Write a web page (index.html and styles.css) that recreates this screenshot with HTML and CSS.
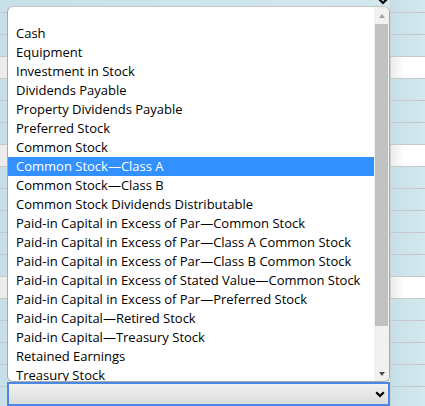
FILE: index.html
```html
<!DOCTYPE html>
<html>
<head>
<meta charset="utf-8">
<link rel="stylesheet" href="styles.css">
</head>
<body>
<div class="grid">
  <div class="row"><div class="cell main"></div><div class="cell side"></div></div>
  <div class="row"><div class="cell main"></div><div class="cell side"></div></div>
  <div class="row"><div class="cell main"></div><div class="cell side"></div></div>
  <div class="row white"><div class="cell main"></div><div class="cell side"></div></div>
  <div class="row"><div class="cell main"></div><div class="cell side"></div></div>
  <div class="row"><div class="cell main"></div><div class="cell side"></div></div>
  <div class="row"><div class="cell main"></div><div class="cell side"></div></div>
  <div class="row white"><div class="cell main"></div><div class="cell side"></div></div>
  <div class="row"><div class="cell main"></div><div class="cell side"></div></div>
  <div class="row"><div class="cell main"></div><div class="cell side"></div></div>
  <div class="row"><div class="cell main"></div><div class="cell side"></div></div>
  <div class="row"><div class="cell main"></div><div class="cell side"></div></div>
  <div class="row"><div class="cell main"></div><div class="cell side"></div></div>
  <div class="row white"><div class="cell main"></div><div class="cell side"></div></div>
  <div class="row"><div class="cell main"></div><div class="cell side"></div></div>
  <div class="row"><div class="cell main"></div><div class="cell side"></div></div>
  <div class="row"><div class="cell main"></div><div class="cell side"></div></div>
  <div class="row"><div class="cell main"></div><div class="cell side"></div></div>
  <div class="row"><div class="cell main"></div><div class="cell side"></div></div>
</div>

<div class="popup">
  <svg class="chev top-chev" width="10" height="7" viewBox="0 0 10 7"><path d="M1.2 1.2 L5 5 L8.8 1.2" fill="none" stroke="#000" stroke-width="2.2"/></svg>
  <div class="listbox">
    <ul class="options">
      <li class="opt"></li>
      <li class="opt">Cash</li>
      <li class="opt">Equipment</li>
      <li class="opt">Investment in Stock</li>
      <li class="opt">Dividends Payable</li>
      <li class="opt">Property Dividends Payable</li>
      <li class="opt">Preferred Stock</li>
      <li class="opt">Common Stock</li>
      <li class="opt selected">Common Stock—Class A</li>
      <li class="opt">Common Stock—Class B</li>
      <li class="opt">Common Stock Dividends Distributable</li>
      <li class="opt">Paid-in Capital in Excess of Par—Common Stock</li>
      <li class="opt">Paid-in Capital in Excess of Par—Class A Common Stock</li>
      <li class="opt">Paid-in Capital in Excess of Par—Class B Common Stock</li>
      <li class="opt">Paid-in Capital in Excess of Stated Value—Common Stock</li>
      <li class="opt">Paid-in Capital in Excess of Par—Preferred Stock</li>
      <li class="opt">Paid-in Capital—Retired Stock</li>
      <li class="opt">Paid-in Capital—Treasury Stock</li>
      <li class="opt">Retained Earnings</li>
      <li class="opt">Treasury Stock</li>
    </ul>
    <div class="scrollbar">
      <div class="sb-btn"><span class="tri up"></span></div>
      <div class="sb-track"><div class="sb-thumb"></div></div>
      <div class="sb-btn"><span class="tri down"></span></div>
    </div>
  </div>
  <div class="select">
    <svg class="chev" width="10" height="7" viewBox="0 0 10 7"><path d="M1.2 1.2 L5 5 L8.8 1.2" fill="none" stroke="#000" stroke-width="2.2"/></svg>
  </div>
</div>
</body>
</html>
```

FILE: styles.css
```css
html, body {
  margin: 0;
  padding: 0;
  width: 425px;
  height: 406px;
  overflow: hidden;
  font-family: "Open Sans", "Liberation Sans", sans-serif;
}

.grid {
  margin-top: -9px;
  display: flex;
  flex-direction: column;
}

.row {
  display: flex;
  height: 22px;
  box-sizing: border-box;
  border-bottom: 1px solid #c6c9cb;
}

.cell {
  height: 100%;
  background: linear-gradient(to right, #c7e0e8, #d4e9ef);
}

.cell.main {
  width: 390px;
}

.cell.side {
  flex: 1;
  border-left: 1px solid #c9d3d6;
}

.row.white .cell {
  background: linear-gradient(to right, #ebebeb, #ffffff 40%);
}

.popup {
  position: absolute;
  left: 7px;
  top: 6px;
  width: 383px;
  display: flex;
  flex-direction: column;
}

.top-chev {
  position: absolute;
  left: 371px;
  top: -8px;
  z-index: 2;
}

.listbox {
  height: 376px;
  box-sizing: border-box;
  border: 1px solid #a9a9a9;
  border-top-color: #c4c4c4;
  border-radius: 6px;
  background: #fff;
  overflow: hidden;
  display: flex;
}

.options {
  list-style: none;
  margin: -2px 0 0 0;
  padding: 0;
  flex: 1;
  font-size: 13px;
  color: #000;
}

.opt {
  height: 19px;
  line-height: 19px;
  padding-left: 8px;
  white-space: nowrap;
}

.opt.selected {
  background: #3390ff;
  color: #fff;
}

.scrollbar {
  width: 15px;
  background: #f1f1f1;
  display: flex;
  flex-direction: column;
}

.sb-btn {
  height: 17px;
  display: flex;
  align-items: center;
  justify-content: center;
}

.tri {
  width: 0;
  height: 0;
  border-left: 3.5px solid transparent;
  border-right: 3.5px solid transparent;
}

.tri.up {
  border-bottom: 4px solid #a3a3a3;
  margin-top: 1px;
}

.tri.down {
  border-top: 4px solid #505050;
  margin-bottom: -3px;
}

.sb-track {
  flex: 1;
  padding: 0 1px;
}

.sb-thumb {
  height: 302px;
  background: #c1c1c1;
}

.select {
  height: 24px;
  box-sizing: border-box;
  border: 2px solid #4a88e6;
  background: linear-gradient(to bottom, #f2f2f2, #dcdcdc);
  display: flex;
  align-items: center;
  justify-content: flex-end;
  padding-right: 3px;
}
```
